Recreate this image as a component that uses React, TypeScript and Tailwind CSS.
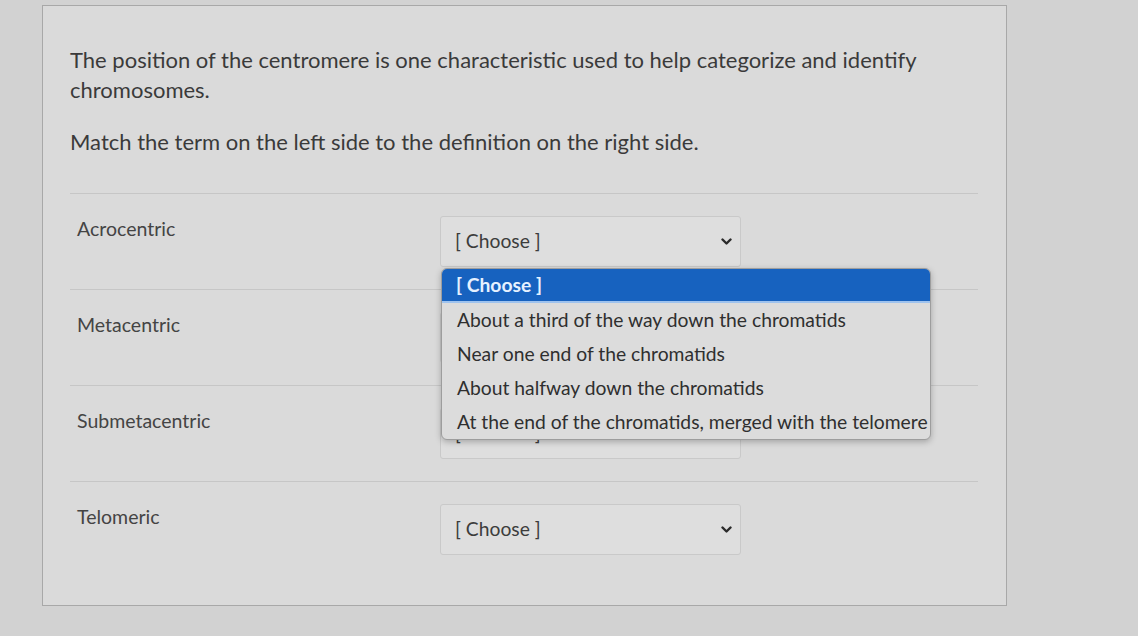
import React from 'react';

const terms = ['Acrocentric', 'Metacentric', 'Submetacentric', 'Telomeric'];

const options = [
  'About a third of the way down the chromatids',
  'Near one end of the chromatids',
  'About halfway down the chromatids',
  'At the end of the chromatids, merged with the telomere',
];

const Chevron: React.FC = () => (
  <svg width="11" height="8" viewBox="0 0 11 8" fill="none">
    <path d="M1.5 1.5 L5.5 5.5 L9.5 1.5" stroke="#2a2a2a" strokeWidth="2.4" strokeLinecap="round" strokeLinejoin="round" />
  </svg>
);

const Select: React.FC<{ open?: boolean }> = ({ open }) => (
  <div className="relative">
    <div className="w-[301px] h-[51px] border border-[#c9c9c9] rounded-[3px] bg-[#dedede] flex items-center justify-between pl-[14px] pr-[8px]">
      <span className="text-[19.3px] text-[#3c3c3c]">[ Choose ]</span>
      <Chevron />
    </div>
    {open && (
      <div className="absolute left-[1px] top-[52px] w-[490px] z-10 rounded-[6px] border border-[#9d9d9d] bg-[#dcdcdc] shadow-[0_2px_6px_rgba(0,0,0,0.25)] overflow-hidden">
        <div className="h-[34px] bg-[#1762bf] border-b-2 border-[#9fc3ee] flex items-center px-[14px] text-[19.3px] font-bold text-[#e6f1ff]">
          [ Choose ]
        </div>
        {options.map(o => (
          <div key={o} className="h-[34px] flex items-center pl-[15px] text-[19.3px] text-[#2f2f2f] whitespace-nowrap">
            {o}
          </div>
        ))}
      </div>
    )}
  </div>
);

export default function App() {
  return (
    <div
      className="w-[1138px] h-[636px] bg-[#d2d2d2] pt-[5px] pl-[42px] overflow-hidden"
      style={{ fontFamily: 'Lato, "Open Sans", sans-serif' }}
    >
      <div className="w-[965px] h-[601px] border border-[#a8a8a8] bg-[#dadada] px-[27px] pt-[39px]">
        <p className="text-[22px] leading-[30px] text-[#3a3a3a] w-[870px]">
          The position of the centromere is one characteristic used to help categorize and identify chromosomes.
        </p>
        <p className="mt-[22px] text-[22px] leading-[30px] text-[#3a3a3a]">
          Match the term on the left side to the definition on the right side.
        </p>
        <div className="mt-[36px] w-[908px]">
          {terms.map((t, i) => (
            <div key={t} className="h-[96px] border-t border-[#c6c6c6] flex pt-[22px]">
              <div className="w-[370px] pl-[7px] text-[19.5px] leading-[26px] text-[#444]">{t}</div>
              <Select open={i === 0} />
            </div>
          ))}
        </div>
      </div>
    </div>
  );
}
